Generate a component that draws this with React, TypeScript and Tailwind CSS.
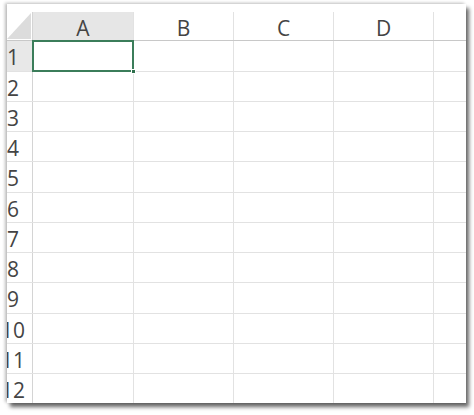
import React from "react";

const cols = [
  { label: "A", w: 101 },
  { label: "B", w: 100 },
  { label: "C", w: 100 },
  { label: "D", w: 100 },
  { label: "", w: 40 },
];
const rowH = [31, 30, 30, 30, 31, 30, 30, 30, 31, 30, 30, 30];

export default function App() {
  return (
    <div className="w-[474px] h-[415px] bg-white overflow-hidden" style={{ fontFamily: '"Open Sans", "Noto Sans", sans-serif' }}>
      <div className="ml-[7px] mt-[4px] w-[459px] h-[399px] bg-white overflow-hidden shadow-[3px_4px_4px_rgba(0,0,0,0.6),-2px_-1px_3px_rgba(0,0,0,0.25)]">
        <div className="h-[8px]" />
        {/* header row */}
        <div className="flex h-[29px] border-b border-[#c8c8c8]">
          <div className="relative w-[26px] shrink-0 border-r border-[#d4d4d4] bg-white">
            <svg className="absolute right-[1px] bottom-[1px]" width="24" height="26" viewBox="0 0 24 26">
              <polygon points="24,0 24,26 0,26" fill="#dcdcdc" />
            </svg>
          </div>
          {cols.map((c, i) => (
            <div
              key={i}
              style={{ width: c.w }}
              className={`shrink-0 flex items-center justify-center pt-[4px] text-[21px] leading-none text-[#444] border-r border-[#e2e2e2] ${i === 0 ? "bg-[#e6e6e6]" : "bg-white"}`}
            >
              {c.label}
            </div>
          ))}
        </div>
        {rowH.map((h, r) => (
          <div key={r} className="flex border-b border-[#e2e2e2]" style={{ height: h }}>
            <div className={`w-[26px] shrink-0 border-r border-[#d4d4d4] flex items-center justify-center pr-[13px] pt-[3px] text-[21px] text-[#444] leading-none whitespace-nowrap ${r === 0 ? "bg-[#e8e8e8]" : "bg-white"}`}>
              <span>{r + 1}</span>
            </div>
            {cols.map((c, i) => (
              <div
                key={i}
                style={{ width: c.w }}
                className="relative shrink-0 border-r border-[#e2e2e2]"
              >
                {r === 0 && i === 0 && (
                  <div className="absolute left-[-1px] top-[-1px] w-[102px] h-[32px] border-2 border-[#3b7d5a] z-10">
                    <div className="absolute right-[-4px] bottom-[-4px] w-[5px] h-[5px] bg-[#2d6e4c] border border-white" />
                  </div>
                )}
              </div>
            ))}
          </div>
        ))}
      </div>
    </div>
  );
}
